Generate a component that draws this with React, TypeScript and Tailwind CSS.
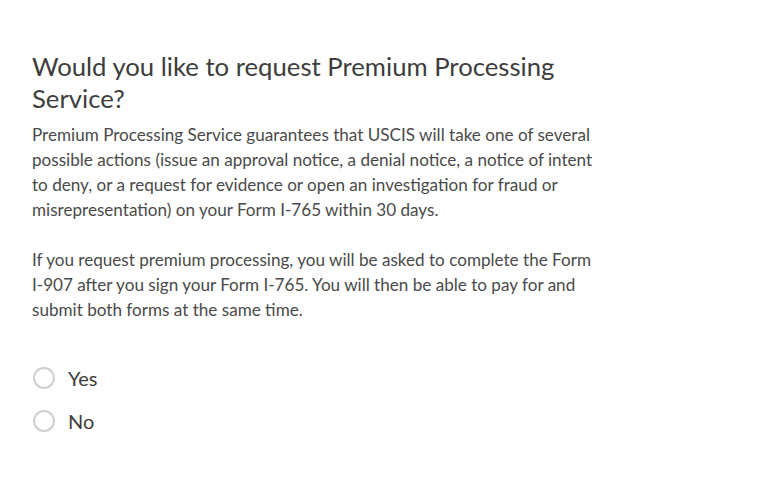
import React from "react";

const Radio = ({ label }: { label: string }) => (
  <label className="flex items-center h-[43px]">
    <span className="w-[22px] h-[22px] rounded-full border-2 border-[#cfcfcf] bg-white ml-[1px]" />
    <span className="ml-[13px] text-[20px] text-[#3d3d3d]">{label}</span>
  </label>
);

export default function App() {
  return (
    <div className="w-[768px] h-[493px] bg-white pl-[32px] pt-[50px]" style={{ fontFamily: "Lato, 'Open Sans', sans-serif" }}>
      <h1 className="text-[25.7px] leading-[32px] text-[#3d3d3d] font-normal whitespace-nowrap">
        Would you like to request Premium Processing
        <br />
        Service?
      </h1>
      <div className="mt-[8px] text-[17.1px] leading-[25px] text-[#4a4a4a] whitespace-nowrap">
        <p>
          Premium Processing Service guarantees that USCIS will take one of several
          <br />
          possible actions (issue an approval notice, a denial notice, a notice of intent
          <br />
          to deny, or a request for evidence or open an investigation for fraud or
          <br />
          misrepresentation) on your Form I-765 within 30 days.
        </p>
        <p className="mt-[25px]">
          If you request premium processing, you will be asked to complete the Form
          <br />
          I-907 after you sign your Form I-765. You will then be able to pay for and
          <br />
          submit both forms at the same time.
        </p>
      </div>
      <div className="mt-[34px] flex flex-col">
        <Radio label="Yes" />
        <Radio label="No" />
      </div>
    </div>
  );
}
